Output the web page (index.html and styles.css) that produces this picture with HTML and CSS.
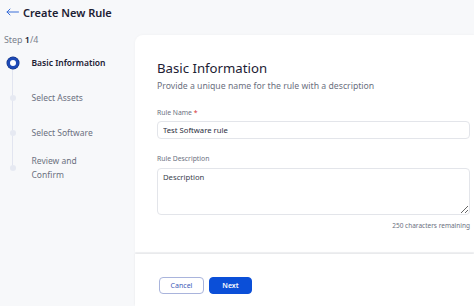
FILE: index.html
```html
<!DOCTYPE html>
<html lang="en">
<head>
    <meta charset="UTF-8">
    <meta name="viewport" content="width=device-width, initial-scale=1.0">
    <title>Create New Rule</title>
    <link rel="stylesheet" href="styles.css">
</head>
<body>
    <div class="header">
        <svg class="back-arrow" width="13" height="8" viewBox="0 0 13 8">
            <path d="M12.5 4H1M4 1L1 4l3 3" fill="none" stroke="#3a6fd8" stroke-width="1" stroke-linecap="round" stroke-linejoin="round"/>
        </svg>
        <h1>Create New Rule</h1>
    </div>
    <div class="layout">
        <div class="sidebar">
            <div class="step-count">Step <b>1</b>/4</div>
            <ul class="steps">
                <li class="step active"><span class="dot"></span><span class="step-label">Basic Information</span></li>
                <li class="step"><span class="dot"></span><span class="step-label">Select Assets</span></li>
                <li class="step"><span class="dot"></span><span class="step-label">Select Software</span></li>
                <li class="step"><span class="dot"></span><span class="step-label">Review and<br>Confirm</span></li>
            </ul>
        </div>
        <div class="main">
            <div class="card">
                <h2>Basic Information</h2>
                <p class="subtitle">Provide a unique name for the rule with a description</p>
                <label class="field-label" for="ruleName">Rule Name <span class="required">*</span></label>
                <input type="text" id="ruleName" value="Test Software rule">
                <label class="field-label desc-label" for="ruleDesc">Rule Description</label>
                <textarea id="ruleDesc" placeholder="Description"></textarea>
                <div class="char-count">250 characters remaining</div>
            </div>
            <div class="footer">
                <button class="btn cancel-button">Cancel</button>
                <button class="btn next-button">Next</button>
            </div>
        </div>
    </div>
</body>
</html>
```

FILE: styles.css
```css
body {
    font-family: "Noto Sans", "Open Sans", Arial, sans-serif;
    margin: 0;
    background: #f7f8fa;
    color: #1c2033;
    height: 100vh;
    display: flex;
    flex-direction: column;
    overflow: hidden;
}

.header {
    display: flex;
    align-items: center;
    height: 24px;
    padding: 0 0 0 6px;
    gap: 4px;
}

.back-arrow {
    flex-shrink: 0;
    margin-top: -1px;
}

.header h1 {
    margin: 0;
    font-size: 11px;
    font-weight: 600;
    color: #1c2033;
}

.layout {
    display: flex;
    flex: 1;
    min-height: 0;
}

.sidebar {
    width: 135px;
    flex-shrink: 0;
}

.step-count {
    font-size: 8.9px;
    line-height: 12px;
    color: #7a7f8c;
    padding: 10px 0 0 4px;
}

.step-count b {
    color: #1c2033;
    font-weight: 600;
}

.steps {
    list-style: none;
    margin: -1px 0 0 0;
    padding: 0;
    position: relative;
}

.steps::before {
    content: "";
    position: absolute;
    left: 12px;
    top: 18px;
    height: 104px;
    width: 1px;
    background: #e2e5f0;
}

.step {
    display: flex;
    align-items: center;
    height: 35px;
    font-size: 8.5px;
    color: #6b7080;
}

.step.active {
    color: #1c2033;
    font-weight: 600;
}

.step .dot {
    width: 6px;
    height: 6px;
    border-radius: 50%;
    background: #e6e9f2;
    margin: 0 16px 0 9.5px;
    flex-shrink: 0;
    position: relative;
    z-index: 1;
}

.step.active .dot {
    box-sizing: border-box;
    width: 12px;
    height: 12px;
    border: 3.5px solid #1d49b5;
    background: #fff;
    margin: 0 13px 0 6.5px;
    box-shadow: 0 0 0 0.5px #0f2c77;
}

.step-label {
    line-height: 14px;
}

.main {
    flex: 1;
    display: flex;
    flex-direction: column;
    margin-top: 11px;
}

.card {
    flex: 1;
    background: #fff;
    border-radius: 8px 0 0 0;
    padding: 24px 4px 0 22px;
    display: flex;
    flex-direction: column;
    box-shadow: 0 0 3px rgba(0, 0, 0, 0.04);
}

.card h2 {
    margin: 0;
    font-size: 13.2px;
    line-height: 18px;
    font-weight: 400;
    color: #1c2033;
}

.subtitle {
    margin: 3px 0 0 0;
    font-size: 8.7px;
    line-height: 12px;
    color: #6b7080;
}

.field-label {
    font-size: 6.8px;
    line-height: 10px;
    color: #6b7080;
    margin-top: 16px;
}

.required {
    color: #d32f2f;
}

input[type="text"] {
    box-sizing: border-box;
    margin-top: 3px;
    height: 18px;
    border: 1px solid #e3e5ea;
    border-radius: 4px;
    padding: 0 5px;
    font-family: inherit;
    font-size: 7.7px;
    font-weight: 400;
    color: #2a2e3c;
    outline: none;
}

.desc-label {
    margin-top: 15px;
}

textarea {
    box-sizing: border-box;
    margin-top: 4px;
    height: 47px;
    border: 1px solid #e3e5ea;
    border-radius: 4px;
    padding: 3px 5px;
    font-family: inherit;
    font-size: 7.7px;
    resize: vertical;
    outline: none;
}

textarea::placeholder {
    color: #3a3f4e;
}

.char-count {
    text-align: right;
    font-size: 6.5px;
    line-height: 10px;
    color: #6b7080;
    margin-top: 6px;
}

.footer {
    height: 52px;
    flex-shrink: 0;
    margin-top: 2px;
    background: #fff;
    box-shadow: 0 -1px 2px rgba(0, 0, 0, 0.08);
    display: flex;
    align-items: center;
    box-sizing: border-box;
    padding: 11px 0 0 24px;
    gap: 5px;
}

.btn {
    box-sizing: border-box;
    height: 17px;
    border-radius: 4px;
    font-family: inherit;
    font-size: 7px;
    cursor: pointer;
    padding: 0;
}

.cancel-button {
    width: 45px;
    background: #fff;
    border: 1px solid #a9b4dc;
    color: #3d5bb8;
}

.next-button {
    width: 43px;
    background: #0b4fd8;
    border: 1px solid #0b4fd8;
    color: #fff;
    font-weight: 600;
}
```
